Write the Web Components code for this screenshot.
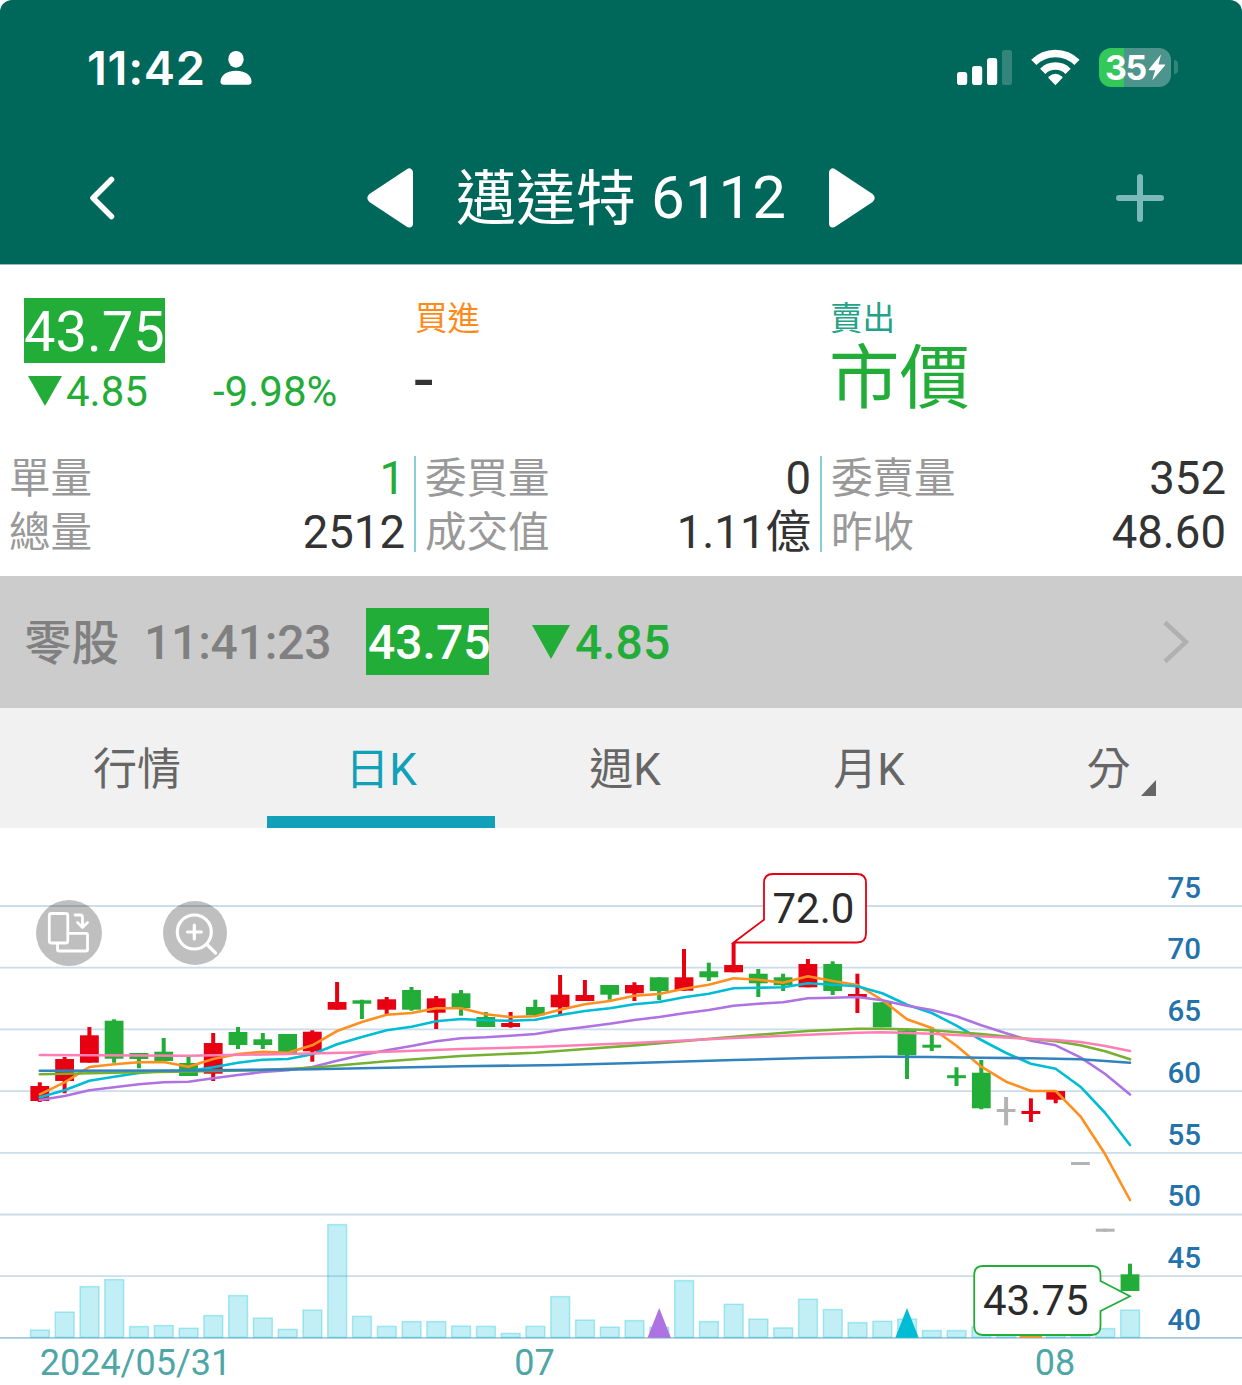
<!DOCTYPE html>
<html lang="zh-Hant">
<head>
<meta charset="utf-8">
<title>邁達特 6112</title>
<style>
body {
    margin: 0;
    width: 1242px;
    background: #fff;
    color: #333;
    font-family: Roboto, "Noto Sans CJK TC", sans-serif;
    --down: #22ac38;
}
</style>
</head>
<body>
<stock-app></stock-app>

<script>
const define = (name, html, setup) => {
    const template = document.createElement('template');
    template.innerHTML = html;

    customElements.define(name, class extends HTMLElement {
        constructor() {
            super();
            this.attachShadow({ mode: 'open' }).appendChild(template.content.cloneNode(true));
        }

        connectedCallback() {
            if (setup) setup(this, this.shadowRoot);
        }
    });
};

define('status-bar', `
<style>
:host{display:flex;box-sizing:border-box;height:136px;padding:0 64px 0 87px;align-items:center;justify-content:space-between;color:#fff;font-family:Inter,sans-serif}
.side{display:flex;align-items:center}
.side.right{margin-top:-1px}
.time{font-size:47px;font-weight:600;line-height:56px;letter-spacing:.7px}
svg{display:block}
.person{margin-left:14px}
.wifi{margin:-1px 18px 0 18px}
.battery{display:flex;align-items:center;margin-top:-1px}
.cell{box-sizing:border-box;display:flex;align-items:center;width:72px;height:39px;padding-left:6px;border-radius:12px;background:linear-gradient(90deg,#34c759 25px,#4d958c 25px);font-size:34px;font-weight:700;line-height:39px;letter-spacing:-1.5px}
.bolt{margin-left:2px}
.tip{width:4px;height:14px;margin-left:3px;border-radius:0 4px 4px 0;background:#33857c}
</style>
<div class="side">
    <span class="time">11:42</span>
    <svg class="person" width="32" height="36" viewBox="0 0 32 36" fill="#fff"><ellipse cx="16" cy="9.3" rx="7.7" ry="8.4"/><path d="M.5 31.5C.5 26 6 20.7 16 20.7S31.500 26 31.500 31.500Q31.500 34.800 28 34.800H4Q.5 34.800.5 31.500Z"/></svg>
</div>
<div class="side right">
    <svg width="56" height="36" viewBox="0 0 56 36" fill="#fff"><rect x="0" y="22" width="10.200" height="13" rx="2.800"/><rect x="15" y="16" width="10.200" height="19" rx="2.800"/><rect x="30" y="8" width="10.200" height="27" rx="2.800"/><rect x="45" y="0" width="10" height="35" rx="2.800" opacity=".2"/></svg>
    <svg class="wifi" width="50" height="38" viewBox="0 0 50 38" fill="none" stroke="#fff" stroke-width="7.4"><path d="M2.800 14.400A30.600 30.600 0 0 1 46 14.400M11.700 23.300A18 18 0 0 1 37.100 23.300"/><path d="M24.400 37.300L17.500 30Q16.900 29.200 17.800 28.400Q24.400 23 31 28.400Q31.900 29.200 31.300 30Z" fill="#fff" stroke="none"/></svg>
    <div class="battery">
        <div class="cell">35<svg class="bolt" width="18" height="27" viewBox="0 0 18 27"><path d="M13 .5L.8 15.200Q.3 16.200 1.300 16.200H7.200L4.200 26.500L17 11.600Q17.600 10.600 16.500 10.600H10.500Z" fill="#fff"/></svg></div>
        <div class="tip"></div>
    </div>
</div>
`);

define('nav-bar', `
<style>
:host{display:flex;box-sizing:border-box;height:124px;padding:0 78px 0 89px;align-items:center;justify-content:space-between;color:#fff}
svg{display:block;fill:none;stroke-linecap:round;stroke-linejoin:round}
.title{display:flex;align-items:center;gap:42px;margin-left:11px;font-size:60px;line-height:80px;white-space:nowrap}
</style>
<svg width="26" height="44" viewBox="0 0 26 44" stroke="#fff" stroke-width="5.500"><path d="M22.500 3.500L4 22L22.500 40.500"/></svg>
<div class="title">
    <svg width="48" height="62" viewBox="0 0 48 62"><path d="M43 5.500V56.500L6 32Q4.600 31 6 30Z" fill="#fff" stroke="#fff" stroke-width="8"/></svg>
    <slot></slot>
    <svg width="48" height="62" viewBox="0 0 48 62"><path d="M5 5.500V56.500L42 32Q43.400 31 42 30Z" fill="#fff" stroke="#fff" stroke-width="8"/></svg>
</div>
<svg width="48" height="48" viewBox="0 0 48 48" stroke="#7cb9bc" stroke-width="6"><path d="M3 24H45M24 3V45"/></svg>
`);

define('price-change', `
<style>
:host{display:inline-flex;align-items:center;color:var(--down)}
svg{display:block;width:var(--w,34px);height:var(--h,30px);margin:-2px var(--gap,4px) 0 0;fill:currentColor}
</style>
<svg viewBox="0 0 10 10" preserveAspectRatio="none"><path d="M0 0H10L5 10Z"/></svg><slot></slot>
`);

define('quote-panel', `
<style>
:host{display:grid;box-sizing:border-box;height:187px;padding:34px 0 0 24px;grid-template-columns:391px 415px 1fr}
.last{display:inline-block;width:141px;height:65px;background:var(--down);color:#fff;font-size:56px;line-height:68px;vertical-align:top}
.change{display:flex;height:56px;padding:1px 0 0 4px;align-items:center;font-size:42px;line-height:56px;color:var(--down)}
.change price-change{width:185px}
.name{padding-top:1px;font-size:32.5px;line-height:40px}
.value{margin-left:-1px;font-size:70px;line-height:83px}
</style>
<div>
    <span class="last">43.75</span>
    <div class="change"><price-change>4.85</price-change><span>-9.98%</span></div>
</div>
<div>
    <div class="name" style="color:#ff8a1c">買進</div>
    <div class="value">-</div>
</div>
<div>
    <div class="name" style="color:#23a288">賣出</div>
    <div class="value" style="font-size:70.5px;line-height:81px;color:var(--down)">市價</div>
</div>
`);

define('stat-row', `
<style>
:host{display:flex;height:54px;justify-content:space-between;line-height:56px;font-size:45.5px}
.label{color:#999;font-size:41.5px}
</style>
<span class="label"></span><slot></slot>
`, (el, root) => {
    root.querySelector('.label').textContent = el.getAttribute('label');
});

define('stat-grid', `
<style>
:host{display:grid;box-sizing:border-box;height:125px;grid-template-columns:414px 406px 422px}
.col{padding:0 9px}
.col + .col{padding-left:11px;background:linear-gradient(#86ced8,#86ced8) 0 5px/2px 96px no-repeat}
.col:last-child{padding-right:16px}
</style>
<div class="col"><stat-row label="單量"><span style="color:var(--down)">1</span></stat-row><stat-row label="總量">2512</stat-row></div>
<div class="col"><stat-row label="委買量">0</stat-row><stat-row label="成交值">1.11億</stat-row></div>
<div class="col"><stat-row label="委賣量">352</stat-row><stat-row label="昨收">48.60</stat-row></div>
`);

define('odd-lot-bar', `
<style>
:host{display:flex;box-sizing:border-box;height:132px;padding:0 53px 1px 24px;align-items:center;background:#ccc;color:#808080;font-size:48px;font-weight:500;line-height:67px;white-space:nowrap}
.name{width:120px;padding-top:5px;font-size:47.5px}
.time{width:222px;padding-top:2px;letter-spacing:-.2px}
.last{box-sizing:border-box;width:123px;height:67px;padding-left:2px;margin-right:43px;background:var(--down);color:#fff;line-height:69px}
price-change{padding-top:2px;--w:38px;--h:34px;--gap:5px}
.more{margin-left:auto}
</style>
<span class="name">零股</span><span class="time">11:41:23</span><span class="last">43.75</span><price-change>4.85</price-change>
<svg class="more" width="26" height="44" viewBox="0 0 26 44" fill="none" stroke="#b0b0b0" stroke-width="4.5"><path d="M2 2.500L23 22L2 41.500"/></svg>
`);

define('tab-item', `
<style>
:host{display:flex;box-sizing:border-box;width:244px;height:120px;padding-top:15px;justify-content:center;font-size:44px;line-height:94px;color:#666}
:host([active]){color:#10a1b8;background:linear-gradient(#10a1b8,#10a1b8) 50% 100%/228px 12px no-repeat}
:host([menu]){padding-right:9px}
svg{display:none}
:host([menu]) svg{display:block;width:15px;height:16px;margin:57px -25px 0 10px}
</style>
<slot></slot><svg viewBox="0 0 15 16"><path d="M15 0V16H0Z" fill="#666"/></svg>
`);

define('tab-strip', `
<style>
:host{display:flex;height:120px;padding-left:15px;background:#f1f1f1;box-sizing:border-box}
</style>
<slot></slot>
`);

define('chart-button', `
<style>
:host{position:absolute;display:block;border-radius:50%;background:rgba(0,0,0,.25)}
::slotted(svg){display:block;fill:none;stroke:#fff;stroke-linecap:round;stroke-linejoin:round}
</style>
<slot></slot>
`);

// high, body top, body bottom, low, volume top - all in screen rows
const candles = [
    ['u', 1082.3, 1086, 1101, 1102, 1329.5],
    ['u', 1057, 1059, 1081, 1093.3, 1311.5],
    ['u', 1027, 1035.3, 1062.7, 1062.7, 1286],
    ['d', 1019.3, 1020.7, 1058.7, 1062.7, 1279],
    ['d', 1053, 1053, 1059, 1068.3, 1326],
    ['d', 1038, 1051.7, 1061, 1062, 1325],
    ['d', 1057, 1063, 1076, 1076, 1327.7],
    ['u', 1033, 1043, 1073.7, 1081, 1315],
    ['d', 1027, 1032, 1045, 1049, 1295],
    ['d', 1033, 1039.3, 1045, 1049, 1317.5],
    ['d', 1034, 1034, 1053.3, 1053.3, 1328.8],
    ['u', 1030.3, 1031.7, 1051.3, 1061.7, 1309.5],
    ['u', 982, 1002, 1009.7, 1009.7, 1224],
    ['d', 999.7, 1000.3, 1003.7, 1019, 1315.8],
    ['u', 997, 999.3, 1009.7, 1014, 1325.8],
    ['d', 987, 990, 1009.7, 1010.7, 1321],
    ['u', 996, 998.3, 1012.7, 1029, 1321],
    ['d', 990, 993.3, 1008.3, 1015.7, 1325.5],
    ['d', 1012, 1017, 1027, 1027, 1325.8],
    ['u', 1012, 1023, 1027, 1027.7, 1332.8],
    ['d', 999.7, 1007, 1015.3, 1016, 1325.8],
    ['u', 975, 994.7, 1007.3, 1014.7, 1296],
    ['u', 980, 995, 1001, 1001, 1319.5],
    ['d', 985, 985, 994.7, 999.7, 1326.5],
    ['u', 982.3, 985, 993.3, 1001, 1320],
    ['d', 977.3, 977.3, 991, 1000.3, 1326.7],
    ['u', 949, 977.3, 990.7, 990.7, 1280],
    ['d', 962.7, 971.3, 977.3, 981, 1321],
    ['u', 943, 965, 972.3, 972.3, 1303.7],
    ['d', 969, 973.7, 983.3, 997, 1318.5],
    ['d', 973.7, 977.3, 985.3, 991, 1327.3],
    ['u', 959, 964, 987.3, 987.3, 1298.7],
    ['d', 961.3, 964, 991, 995, 1309],
    ['u', 973.7, 994, 997.3, 1013, 1322],
    ['d', 1002.3, 1002.3, 1027.3, 1027.3, 1320.7],
    ['d', 1028, 1030.3, 1055.3, 1079, 1318.5],
    ['d', 1027.3, 1044.7, 1047.7, 1051, 1330],
    ['d', 1067.3, 1075.2, 1078.2, 1086, 1330],
    ['d', 1060, 1072.7, 1108.3, 1109.3, 1326],
    ['f', 1097, 1109, 1112, 1125.3, 1326],
    ['u', 1098.3, 1111, 1114, 1122, 1325],
    ['u', 1091, 1091, 1099.7, 1103.3, 1328],
    ['f', 1162, 1162, 1165, 1165, 1326],
    ['f', 1228.7, 1228.7, 1231.7, 1231.7, 1328],
    ['d', 1263.7, 1274.3, 1291, 1291, 1309.5]
];

// moving averages: colour, row per candle index
const averages = [
    ['#ff8f1f', [1094.3, 1082.3, 1067, 1064.3, 1062.3, 1062, 1066.7, 1059, 1054, 1051.7, 1052.7, 1045.3, 1031, 1022, 1014.7, 1013, 1008.3, 1008.3, 1014.3, 1017, 1016.3, 1009.7, 1004.3, 1001, 995.8, 994, 988.7, 984.7, 978.3, 979.7, 982.7, 976.3, 981, 985, 1000, 1019.3, 1028, 1045.7, 1066.7, 1081.7, 1091, 1091, 1116.3, 1154.3, 1200]],
    ['#00bcd4', [1097.3, 1090.3, 1080.7, 1076.7, 1073, 1071, 1071, 1067.3, 1062.7, 1059.7, 1059, 1054.3, 1044.3, 1037, 1030.3, 1026.7, 1021.3, 1019, 1020.3, 1020.7, 1019.7, 1015, 1011, 1008.3, 1004.2, 1002, 997.3, 993.7, 988.3, 987.7, 987.3, 983.3, 984.7, 986.3, 993.3, 1004.7, 1013, 1025.7, 1040, 1053, 1063.7, 1068.7, 1086.7, 1113, 1145]],
    ['#af72e2', [1100, 1096, 1090.3, 1087.3, 1084.3, 1082.3, 1081.7, 1078.3, 1075, 1072, 1070.3, 1067, 1060.7, 1055, 1050.3, 1046, 1041.3, 1038.3, 1037.3, 1035.7, 1034, 1030, 1027, 1023.7, 1020, 1017, 1013.3, 1010, 1005.7, 1003.7, 1002.3, 998.3, 997.7, 997, 1000.3, 1005.7, 1010, 1016.3, 1025.3, 1033.3, 1040.7, 1045.3, 1057.3, 1074, 1094.5]],
    ['#76b031', { 0: 1074.3, 3: 1072.7, 6: 1071.5, 9: 1070, 11: 1067.7, 14: 1061.3, 17: 1056, 20: 1052.7, 22: 1049, 24: 1045.4, 28: 1036.7, 31: 1031, 33: 1028.7, 34: 1028.7, 35: 1029.3, 36: 1030.3, 38: 1034, 40: 1039, 41: 1041.3, 42: 1045.3, 43: 1051.3, 44: 1059.3 }],
    ['#ff7eb3', { 0: 1055, 6: 1055.7, 10: 1054, 14: 1051.7, 17: 1049, 20: 1047, 24: 1043, 28: 1038, 31: 1034.7, 33: 1032.7, 34: 1032.3, 36: 1033.7, 38: 1036.3, 40: 1039, 41: 1040, 42: 1042, 43: 1046, 44: 1051 }],
    ['#3282bd', { 0: 1070.7, 6: 1070.5, 11: 1069.3, 12: 1068.7, 17: 1066.3, 21: 1065, 24: 1063, 28: 1060, 31: 1058, 34: 1056.8, 36: 1057, 38: 1057.7, 40: 1058.3, 42: 1059.3, 44: 1062.7 }]
];

define('candle-chart', `
<style>
:host{display:block;position:relative;height:557px}
svg{display:block}
text{font-family:Roboto,sans-serif}
.axis{font-size:29.5px;font-weight:500;fill:#2472ab}
.date{font-size:36px;fill:#4fa6a6}
.tag{font-size:42px;fill:#2b2b2b}
</style>
<svg width="1242" height="557" viewBox="0 828 1242 557"></svg>
<slot></slot>
`, (el, root) => {
    const colors = { u: '#e60012', d: '#22ac38', f: '#b3b3b3' };
    const base = 1337.8;
    const x = i => +(39.8 + i * 24.777).toFixed(1);
    const marker = (i, color) => `<path d="M${x(i)} 1308L${x(i) + 11.7} ${base}H${x(i) - 11.7}Z" fill="${color}"/>`;
    let out = '';

    for (let i = 0; i < 8; i++) {
        const y = 906 + i * 61.7;
        out += `<path d="M0 ${y}H1242" stroke="${i == 7 ? '#a9c7de' : '#cbdcea'}" stroke-width="1.8"/>`;
        out += `<text class="axis" x="1167.500" y="${y - 8.3}">${75 - i * 5}</text>`;
    }

    candles.forEach((c, i) => {
        out += `<rect x="${x(i) - 9.3}" y="${c[5] + .6}" width="18.8" height="${base - c[5] - 1}" fill="#00bcd4" fill-opacity=".24" stroke="#00bcd4" stroke-opacity=".3" stroke-width="1.5"/>`;
    });

    out += marker(25, '#af72e2') + marker(35, '#00bcd4') + marker(40, '#ff8f1f');

    candles.forEach(([kind, high, top, bottom, low], i) => {
        out += `<g fill="${colors[kind]}"><rect x="${x(i) - 2}" y="${high}" width="4" height="${low - high}"/>`;
        out += `<rect x="${x(i) - 9.4}" y="${top}" width="18.8" height="${bottom - top}"/></g>`;
    });

    averages.forEach(([color, rows]) => {
        const points = Object.keys(rows).map(i => `${x(+i)},${rows[i]}`).join(' ');
        out += `<polyline points="${points}" fill="none" stroke="${color}" stroke-width="2.6" stroke-linecap="round" stroke-linejoin="round"/>`;
    });

    out += `<path d="M733.700 942.500L764 919.700V883Q764 874 773 874H857Q866 874 866 883V933.500Q866 942.500 857 942.500Z" fill="#fff" stroke="#e60012" stroke-width="1.800"/>
        <text class="tag" x="772.500" y="922.700">72.0</text>
        <path d="M983 1266H1091.500Q1100.500 1266 1100.500 1275V1281L1130 1296.200L1100.500 1311V1326Q1100.500 1335 1091.500 1335H983Q974.200 1335 974.200 1326V1275Q974.200 1266 983 1266Z" fill="#fff" stroke="#22ac38" stroke-width="1.800"/>
        <text class="tag" x="983" y="1315">43.75</text>
        <text class="date" x="39.700" y="1374.700">2024/05/31</text>
        <text class="date" x="514.300" y="1374.700">07</text>
        <text class="date" x="1034.800" y="1374.700">08</text>`;

    root.querySelector('svg').innerHTML = out;
});

define('stock-app', `
<style>
:host{display:block}
header{height:264px;border-radius:12px 12px 0 0;background:#00675b;box-shadow:0 1px 0 #a3b5b2}
.title{padding-top:2px}
.name{vertical-align:-2px}
</style>
<header>
    <status-bar></status-bar>
    <nav-bar><span class="title"><span class="name">邁達特</span> 6112</span></nav-bar>
</header>
<quote-panel></quote-panel>
<stat-grid></stat-grid>
<odd-lot-bar></odd-lot-bar>
<tab-strip>
    <tab-item>行情</tab-item>
    <tab-item active>日K</tab-item>
    <tab-item>週K</tab-item>
    <tab-item>月K</tab-item>
    <tab-item menu>分</tab-item>
</tab-strip>
<candle-chart>
    <chart-button style="left:36px;top:72px">
        <svg width="66" height="66" viewBox="0 0 66 66" stroke-width="2.8"><rect x="13.300" y="13.500" width="18.500" height="29.500" rx="2"/><path d="M21.500 43.500V49.500Q21.500 51 23 51H50Q51.500 51 51.500 49.500V35Q51.500 33.300 50 33.300H33M39 15H44Q46.500 15 46.500 17.500V27M41.500 22.500L46.500 27.500L51.500 22.500"/></svg>
    </chart-button>
    <chart-button style="left:163px;top:73px">
        <svg width="64" height="64" viewBox="0 0 64 64" stroke-width="3.200"><circle cx="31.300" cy="31" r="17"/><path d="M24.500 31H38.300M31.300 24V38M44.500 44L52.500 52"/></svg>
    </chart-button>
</candle-chart>
`);
</script>
</body>
</html>
